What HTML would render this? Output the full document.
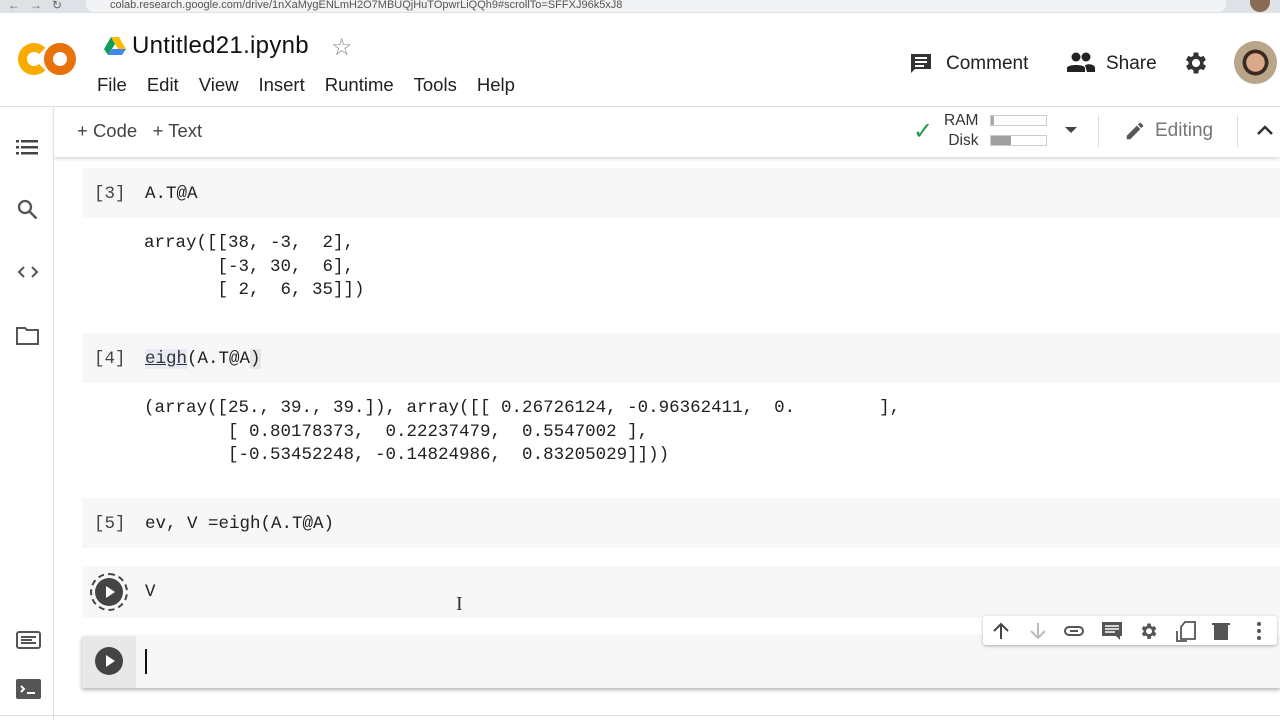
<!DOCTYPE html>
<html><head><style>
*{margin:0;padding:0;box-sizing:border-box}
body{width:1280px;height:720px;overflow:hidden;background:#fff;font-family:"Liberation Sans",sans-serif;color:#212121;position:relative}
.a{position:absolute}
.mono{font-family:"Liberation Mono",monospace;font-size:17.5px;white-space:pre;color:#212121}
.cell{position:absolute;left:82px;right:0;background:#f7f7f7}
.num{position:absolute;left:12px;top:16px;color:#444}
.code{position:absolute;left:63px;top:16px}
.out{position:absolute;left:144px;line-height:23.5px}
.menu span{margin-right:20px}
</style></head><body>
<div class="a" style="left:0;top:0;width:1280px;height:13px;background:#dee1e6"></div>
<div class="a" style="left:86px;top:0;width:1140px;height:12px;background:#f1f3f4;border-radius:0 0 8px 8px;font-size:11px;color:#555;padding-left:24px;line-height:10px">colab.research.google.com/drive/1nXaMygENLmH2O7MBUQjHuTOpwrLiQQh9#scrollTo=SFFXJ96k5xJ8</div>
<div class="a" style="left:8px;top:-2px;font-size:12px;color:#666">←&nbsp;&nbsp;&nbsp;→&nbsp;&nbsp;&nbsp;↻</div>
<div class="a" style="left:1250px;top:0;width:20px;height:12px;border-radius:0 0 10px 10px;background:#8a6a55"></div>
<!-- logo -->
<div class="a" style="left:18px;top:43px;width:32px;height:32px;border:9px solid #f9ab00;border-right-color:transparent;border-radius:50%"></div>
<div class="a" style="left:44px;top:43px;width:32px;height:32px;border:9px solid #e8710a;border-radius:50%"></div>
<svg class="a" style="left:104px;top:37px" width="22" height="18" viewBox="0 0 22 18"><path d="M7 0h8l7 12h-8z" fill="#fbbc04"/><path d="M7 0l4 7-7 11-4-6z" fill="#0f9d58"/><path d="M4 18h14l4-6H8z" fill="#4285f4"/></svg>
<div class="a" style="left:132px;top:32px;font-size:24px;color:#111;letter-spacing:0.3px">Untitled21.ipynb</div>
<div class="a" style="left:331px;top:33px;font-size:24px;color:#888">☆</div>
<div class="a menu" style="left:97px;top:74px;font-size:18.5px;color:#212121"><span>File</span><span>Edit</span><span>View</span><span>Insert</span><span>Runtime</span><span>Tools</span><span>Help</span></div>
<svg class="a" style="left:909px;top:52px" width="24" height="24" viewBox="0 0 24 24"><path d="M2 2h20v15H6l-4 4z" fill="#333"/><path d="M6 6h12M6 10h12M6 14h9" stroke="#fff" stroke-width="2"/></svg>
<div class="a" style="left:946px;top:53px;font-size:19px">Comment</div>
<svg class="a" style="left:1067px;top:52px" width="28" height="20" viewBox="0 0 28 20"><circle cx="9" cy="5" r="4.5" fill="#222"/><circle cx="19" cy="5" r="4.5" fill="#222"/><path d="M0 20v-4c0-4 18-4 18 0v4zM18 13c5-2 10 0 10 3v4h-8z" fill="#222"/></svg>
<div class="a" style="left:1106px;top:53px;font-size:19px">Share</div>
<svg class="a" style="left:1182px;top:49px" width="28" height="28" viewBox="0 0 24 24"><path fill="#333" d="M19.4 13a7.5 7.5 0 000-2l2.1-1.6-2-3.5-2.5 1a7 7 0 00-1.7-1L15 3h-4l-.4 2.9a7 7 0 00-1.7 1l-2.5-1-2 3.5L6.6 11a7.5 7.5 0 000 2l-2.1 1.6 2 3.5 2.5-1a7 7 0 001.7 1L11 21h4l.4-2.9a7 7 0 001.7-1l2.5 1 2-3.5zM13 15.5a3.5 3.5 0 110-7 3.5 3.5 0 010 7z" transform="translate(-1 0)"/></svg>
<div class="a" style="left:1234px;top:41px;width:43px;height:43px;border-radius:50%;background:radial-gradient(circle at 50% 50%,#d9a98a 0 30%,#3a2a20 31% 42%,#b9a68a 43%)"></div>
<!-- toolbar -->
<div class="a" style="left:0;top:106px;width:1280px;height:1px;background:#e0e0e0"></div>
<div class="a" style="left:54px;top:107px;width:1226px;height:50px;box-shadow:0 2px 3px rgba(0,0,0,.15);background:#fff"></div>
<div class="a" style="left:53px;top:107px;width:1px;height:613px;background:#e0e0e0"></div>
<div class="a" style="left:77px;top:120px;font-size:18.5px;color:#444">+ Code&nbsp;&nbsp;&nbsp;+ Text</div>
<div class="a" style="left:913px;top:117px;font-size:24px;color:#1e9e4a">✓</div>
<div class="a" style="left:944px;top:111px;font-size:15.5px;color:#333;line-height:20px;text-align:right">RAM<br>Disk</div>
<div class="a" style="left:990px;top:115px;width:57px;height:11px;border:1px solid #ccc"><div style="width:3px;height:9px;background:#aaa"></div></div>
<div class="a" style="left:990px;top:135px;width:57px;height:11px;border:1px solid #ccc"><div style="width:20px;height:9px;background:#a0a0a0"></div></div>
<div class="a" style="left:1065px;top:127px;border:6px solid transparent;border-top:6px solid #444"></div>
<div class="a" style="left:1098px;top:115px;width:1px;height:32px;background:#e0e0e0"></div>
<svg class="a" style="left:1124px;top:120px" width="22" height="22" viewBox="0 0 24 24"><path fill="#555" d="M3 17.2V21h3.8L17.8 10l-3.8-3.8zM20.7 7a1 1 0 000-1.4l-2.3-2.3a1 1 0 00-1.4 0l-1.8 1.8 3.8 3.8z"/></svg>
<div class="a" style="left:1155px;top:120px;font-size:19px;color:#777">Editing</div>
<div class="a" style="left:1237px;top:115px;width:1px;height:32px;background:#e0e0e0"></div>
<svg class="a" style="left:1256px;top:124px" width="18" height="12"><path d="M2 10l7-7 7 7" stroke="#333" stroke-width="2.5" fill="none"/></svg>
<!-- sidebar icons -->
<svg class="a" style="left:16px;top:138px" width="24" height="18"><g fill="#444"><rect x="0" y="2" width="3" height="2.5"/><rect x="5" y="2" width="17" height="2.5"/><rect x="0" y="8" width="3" height="2.5"/><rect x="5" y="8" width="17" height="2.5"/><rect x="0" y="14" width="3" height="2.5"/><rect x="5" y="14" width="17" height="2.5"/></g></svg>
<svg class="a" style="left:17px;top:199px" width="22" height="22"><circle cx="8" cy="8" r="6" stroke="#555" stroke-width="2.3" fill="none"/><path d="M12.5 12.5l7 7" stroke="#555" stroke-width="2.5"/></svg>
<svg class="a" style="left:17px;top:265px" width="22" height="14"><path d="M7 2l-5 5 5 5M15 2l5 5-5 5" stroke="#555" stroke-width="2" fill="none"/></svg>
<svg class="a" style="left:16px;top:326px" width="24" height="20"><path d="M1 2h8l2 2h11v14H1z" fill="none" stroke="#555" stroke-width="2"/></svg>
<svg class="a" style="left:16px;top:631px" width="25" height="18"><rect x="1" y="1" width="23" height="16" rx="2" fill="none" stroke="#555" stroke-width="2"/><path d="M5 6h15M5 9h11M5 12h15" stroke="#555" stroke-width="2"/></svg>
<svg class="a" style="left:16px;top:679px" width="25" height="20"><rect width="25" height="20" rx="2" fill="#555"/><path d="M5 7l3 3-3 3" stroke="#fff" stroke-width="2" fill="none"/><path d="M11 14h8" stroke="#fff" stroke-width="2"/></svg>
<!-- cells -->
<div class="cell mono" style="top:168px;height:50px"><span class="num">[3]</span><span class="code">A.T@A</span></div>
<div class="a mono out" style="top:232px">array([[38, -3,  2],
       [-3, 30,  6],
       [ 2,  6, 35]])</div>
<div class="cell mono" style="top:333px;height:50px"><span class="num">[4]</span><span class="code"><span style="text-decoration:underline;color:#333;background:#e8eaf6">eigh</span>(A.T@A<span style="background:#e6e6e6">)</span></span></div>
<div class="a mono out" style="top:397px">(array([25., 39., 39.]), array([[ 0.26726124, -0.96362411,  0.        ],
        [ 0.80178373,  0.22237479,  0.5547002 ],
        [-0.53452248, -0.14824986,  0.83205029]]))</div>
<div class="cell mono" style="top:498px;height:50px"><span class="num">[5]</span><span class="code">ev, V =eigh(A.T@A)</span></div>
<div class="cell mono" style="top:566px;height:52px"><span class="code" style="top:16px">V</span></div>
<div class="a" style="left:90px;top:573px;width:38px;height:38px;border-radius:50%;border:2px dashed #444"></div>
<div class="a" style="left:95px;top:578px;width:28px;height:28px;border-radius:50%;background:#444"></div>
<div class="a" style="left:106px;top:586px;border:6px solid transparent;border-left:9px solid #fff;border-right:0"></div>
<div class="a" style="left:456px;top:593px;font-size:20px;color:#333;font-family:'Liberation Serif',serif">I</div>
<div class="cell" style="top:636px;height:52px;box-shadow:0 2px 4px rgba(0,0,0,.3)"><div class="a" style="left:0;top:0;width:54px;height:52px;background:#e8e8e8"></div></div>
<div class="a" style="left:95px;top:647px;width:28px;height:28px;border-radius:50%;background:#444"></div>
<div class="a" style="left:106px;top:655px;border:6px solid transparent;border-left:9px solid #fff;border-right:0"></div>
<div class="a" style="left:145px;top:649px;width:2px;height:25px;background:#111"></div>
<!-- cell toolbar -->
<div class="a" style="left:983px;top:616px;width:294px;height:29px;background:#fff;border-radius:3px;box-shadow:0 1px 3px rgba(0,0,0,.3)"></div>
<svg class="a" style="left:990px;top:619px" width="285" height="24" viewBox="0 0 285 24"><g fill="none" stroke-width="2"><path d="M11 20V5M4 12l7-7 7 7" stroke="#444"/><path d="M48 4v15M41 12l7 7 7-7" stroke="#bbb"/><rect x="75" y="8" width="18" height="8" rx="4" stroke="#555"/></g><path d="M78 12h12" stroke="#fff" stroke-width="3"/><path d="M80 12h8" stroke="#555" stroke-width="2"/><path d="M112 3h20v14h-2v4l-4-4h-14z" fill="#555"/><path d="M115 7h14M115 10h14M115 13h10" stroke="#fff" stroke-width="1.5"/><path fill="#555" transform="translate(148 2) scale(0.85)" d="M19.4 13a7.5 7.5 0 000-2l2.1-1.6-2-3.5-2.5 1a7 7 0 00-1.7-1L15 3h-4l-.4 2.9a7 7 0 00-1.7 1l-2.5-1-2 3.5L6.6 11a7.5 7.5 0 000 2l-2.1 1.6 2 3.5 2.5-1a7 7 0 001.7 1L11 21h4l.4-2.9a7 7 0 001.7-1l2.5 1 2-3.5zM13 15.5a3.5 3.5 0 110-7 3.5 3.5 0 010 7z"/><path d="M195 3h10v17h-14v-12z M187 12v10h10" fill="none" stroke="#555" stroke-width="1.8"/><path d="M224 6h14v15h-14zM222 4h18v2h-18z" fill="#555"/><circle cx="269" cy="5" r="2" fill="#555"/><circle cx="269" cy="12" r="2" fill="#555"/><circle cx="269" cy="19" r="2" fill="#555"/></svg>
<div class="a" style="left:0;top:715px;width:1280px;height:1px;background:#e0e0e0"></div>
</body></html>
